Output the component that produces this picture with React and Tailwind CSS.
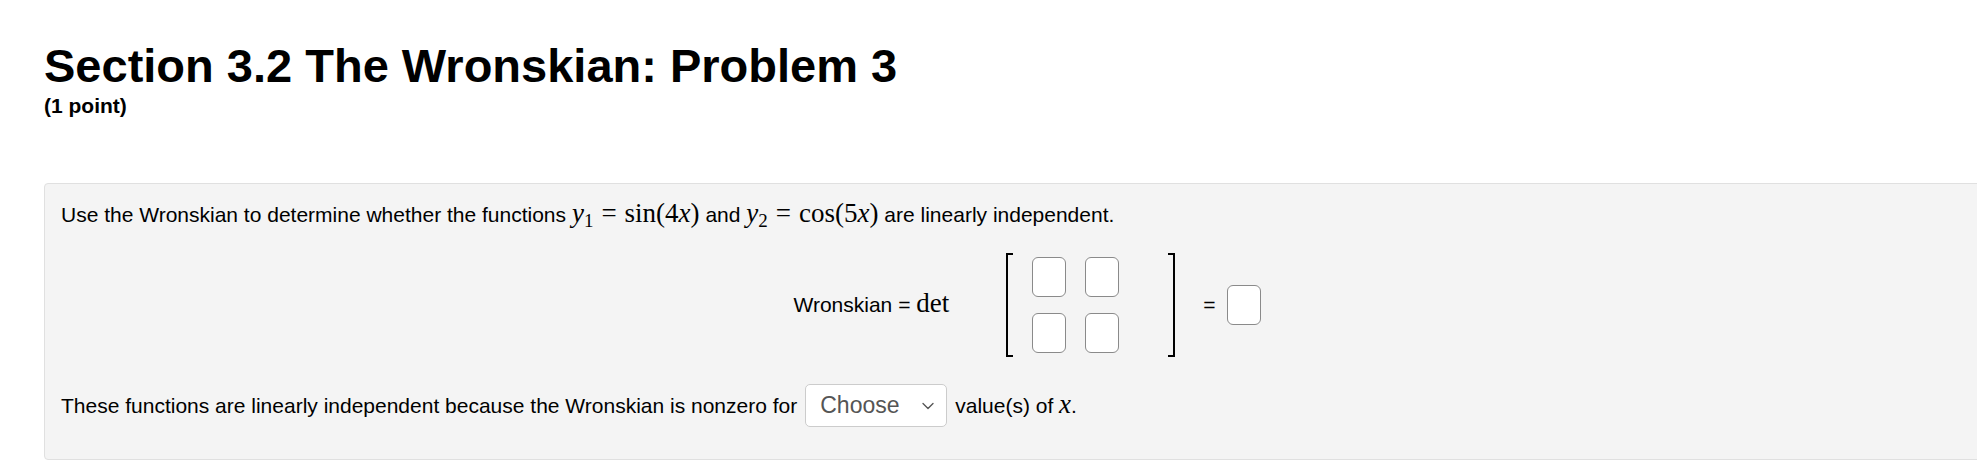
import { ChevronDown } from "lucide-react";

function MathVar({ children }) {
  return <i className="font-['Liberation_Serif',serif] text-[27px] leading-none">{children}</i>;
}

function Rm({ children }) {
  return <span className="font-['Liberation_Serif',serif] text-[27px] leading-none">{children}</span>;
}

function Eq() {
  return <span className="font-['Liberation_Serif',serif] text-[27px] leading-none mx-[8px]">=</span>;
}

function AnswerBox() {
  return <div className="w-[34px] h-[40px] bg-white border-[1.5px] border-[#8a8a8a] rounded-[6px]" />;
}

export default function App() {
  return (
    <div className="w-full h-[468px] overflow-hidden bg-white text-black font-['Liberation_Sans',Arial,sans-serif]">
      <div className="pl-[44px] pt-[42px]">
        {/* Header */}
        <h1 className="text-[47px] leading-none h-[47px] font-bold">Section 3.2 The Wronskian: Problem 3</h1>
        <div className="mt-[5px] text-[21px] leading-[24px] font-bold">(1 point)</div>

        {/* Problem body */}
        <div className="mt-[65px] w-[1966px] bg-[#f4f4f4] border border-[#e0e0e0] rounded-[4px] pt-[16px] px-[16px] pb-[32px] text-[21px]">
          <p className="h-[24px] leading-[24px] whitespace-nowrap">
            Use the Wronskian to determine whether the functions{" "}
            <MathVar>y</MathVar>
            <sub className="font-['Liberation_Serif',serif] text-[19px]">1</sub>
            <Eq />
            <Rm>sin(4</Rm>
            <MathVar>x</MathVar>
            <Rm>)</Rm> and{" "}
            <MathVar>y</MathVar>
            <sub className="font-['Liberation_Serif',serif] text-[19px]">2</sub>
            <Eq />
            <Rm>cos(5</Rm>
            <MathVar>x</MathVar>
            <Rm>)</Rm> are linearly independent.
          </p>

          <div className="mt-[29px] h-[104px] flex items-center justify-center">
            <span className="whitespace-nowrap">
              Wronskian = <Rm>det</Rm>
            </span>
            <div className="ml-[57px] w-[7px] h-[104px] border-l-[2px] border-y-[2px] border-black" />
            <div className="ml-[19px] grid grid-cols-2 gap-x-[19px] gap-y-[16px]">
              <AnswerBox />
              <AnswerBox />
              <AnswerBox />
              <AnswerBox />
            </div>
            <div className="ml-[49px] w-[7px] h-[104px] border-r-[2px] border-y-[2px] border-black" />
            <span className="ml-[28px]">=</span>
            <div className="ml-[11px]">
              <AnswerBox />
            </div>
          </div>

          <div className="mt-[27px] h-[43px] flex items-center whitespace-nowrap">
            <span>These functions are linearly independent because the Wronskian is nonzero for</span>
            <div className="ml-[8px] w-[142px] h-[43px] bg-white border border-[#cccccc] rounded-[5px] flex items-center justify-between pl-[14px] pr-[8px] text-[23px] text-[#555555]">
              <span>Choose</span>
              <ChevronDown size={20} strokeWidth={1.6} className="text-[#555555]" />
            </div>
            <span className="ml-[8px]">
              value(s) of <MathVar>x</MathVar>.
            </span>
          </div>
        </div>
      </div>
    </div>
  );
}
